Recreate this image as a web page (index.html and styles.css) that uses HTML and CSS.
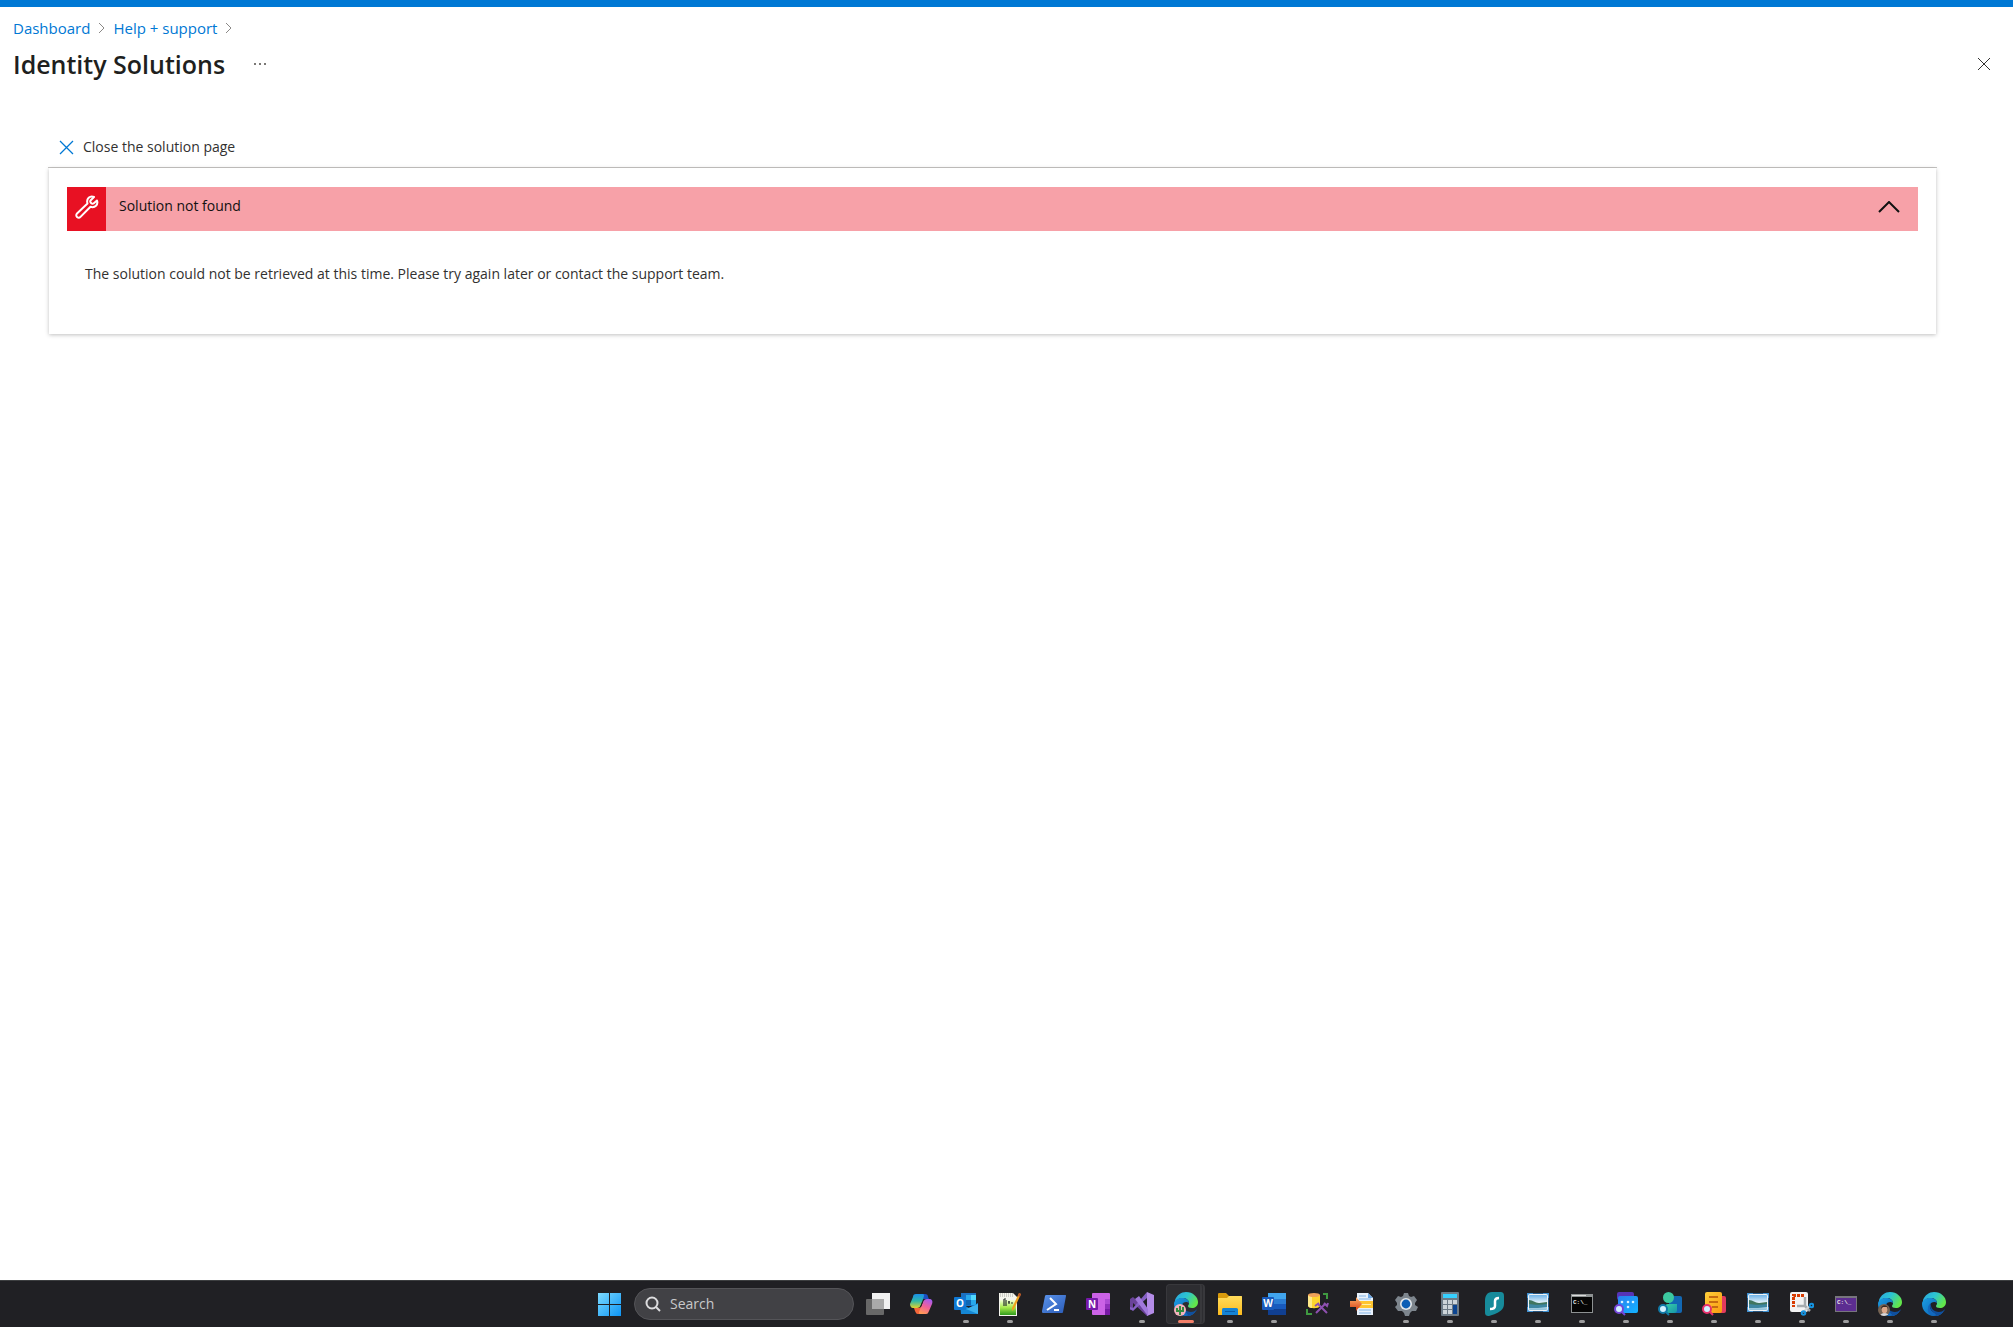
FILE: index.html
```html
<!doctype html>
<html lang="en">

<head>
    <meta charset="UTF-8" />
    <meta name="viewport" content="width=device-width, initial-scale=1.0" />
    <title>Identity Solutions</title>
    <link rel="stylesheet" href="styles.css">
</head>

<body>
    <!-- Shared gradients and icons used more than once -->
    <svg class="defs" aria-hidden="true">
        <defs>
            <linearGradient id="winGrad" gradientUnits="userSpaceOnUse" x1="0" y1="0" x2="24" y2="24">
                <stop offset="0" stop-color="#7fdcff" />
                <stop offset="1" stop-color="#0a93f5" />
            </linearGradient>
            <linearGradient id="edgeTop" x1="0" y1="0" x2="1" y2="0.5">
                <stop offset="0" stop-color="#2aa5e0" />
                <stop offset="0.5" stop-color="#2cc5d2" />
                <stop offset="1" stop-color="#62e64a" />
            </linearGradient>
            <linearGradient id="edgeLeft" x1="0" y1="0" x2="1" y2="1">
                <stop offset="0" stop-color="#1b9de2" />
                <stop offset="1" stop-color="#0c62b4" />
            </linearGradient>
            <linearGradient id="copA" x1="0" y1="0" x2="0" y2="1">
                <stop offset="0" stop-color="#1a8fe8" />
                <stop offset="0.5" stop-color="#2fb8a8" />
                <stop offset="1" stop-color="#e3d32c" />
            </linearGradient>
            <linearGradient id="copB" x1="0.7" y1="0" x2="0.3" y2="1">
                <stop offset="0" stop-color="#a65cf0" />
                <stop offset="0.5" stop-color="#f0609a" />
                <stop offset="1" stop-color="#ff9a55" />
            </linearGradient>
            <linearGradient id="folder" x1="0" y1="0" x2="0" y2="1">
                <stop offset="0" stop-color="#ffdc5c" />
                <stop offset="1" stop-color="#fdbb1e" />
            </linearGradient>
            <linearGradient id="green" x1="0" y1="0" x2="0" y2="1">
                <stop offset="0" stop-color="#f4ffd8" />
                <stop offset="0.5" stop-color="#a6ea4c" />
                <stop offset="1" stop-color="#2f9a1c" />
            </linearGradient>
            <linearGradient id="ps" x1="0" y1="0" x2="1" y2="1">
                <stop offset="0" stop-color="#5b93ea" />
                <stop offset="1" stop-color="#2b5cb8" />
            </linearGradient>
            <linearGradient id="sky" x1="0" y1="0" x2="0" y2="1">
                <stop offset="0" stop-color="#6fb4ea" />
                <stop offset="0.5" stop-color="#e2f1fa" />
                <stop offset="1" stop-color="#8cc0da" />
            </linearGradient>
            <linearGradient id="cal" x1="0" y1="0" x2="1" y2="1">
                <stop offset="0" stop-color="#2a7ff0" />
                <stop offset="1" stop-color="#12b4ff" />
            </linearGradient>
            <linearGradient id="people" x1="0" y1="0" x2="1" y2="1">
                <stop offset="0" stop-color="#38d0a8" />
                <stop offset="1" stop-color="#1794a8" />
            </linearGradient>
            <linearGradient id="note" x1="0" y1="0" x2="1" y2="1">
                <stop offset="0" stop-color="#ffcf3a" />
                <stop offset="1" stop-color="#f99a10" />
            </linearGradient>
            <linearGradient id="arrow" x1="0" y1="0" x2="0" y2="1">
                <stop offset="0" stop-color="#ffb16a" />
                <stop offset="1" stop-color="#d63d14" />
            </linearGradient>
        </defs>
        <symbol id="edge" viewBox="0 0 24 24">
            <path d="M1 8C3 3 7 0 12 0c7 0 12 5 12 10 0 4-3 6-6 6-3 0-4-1-4-2s1-1 1-3c0-3-3-5-6-5-4 0-7 2-8 4z" fill="url(#edgeTop)" />
            <path d="M0 12c0-4 4-6 8-6 4 0 7 2 7 5-1-1-2-1-3-1-3 0-5 3-4 6 1 5 5 7 9 7-2 1-3 1-5 1C5 24 0 18 0 12z" fill="url(#edgeLeft)" />
            <path d="M9 11c-2 3-1 6 1 8 3 3 8 3 12 0-2 3-5 5-9 5-5 0-8-4-7-8 0-2 1-4 3-5z" fill="#1268bd" />
            <path d="M9 11c-1 5 3 9 8 9 2 0 4-1 5-2 1-1 1 0 0 1-2 3-6 5-10 5 4-1 1-2-1-4-3-3-4-6-2-9z" fill="#0f4f9e" />
        </symbol>
        <symbol id="photo" viewBox="0 0 24 24">
            <rect x="1" y="1" width="22" height="19" fill="#27557f" />
            <path d="M1 1h6v5H1zM17 1h6v5h-6zM1 15h6v5H1zM17 15h6v5h-6z" fill="#3f8fcf" />
            <rect x="2" y="2" width="20" height="17" rx="2" fill="#f2f4f5" />
            <rect x="3" y="3" width="18" height="15" rx="1" fill="url(#sky)" />
            <path d="M3 8c4 0 6 3 10 3 3 0 5-1 8-1v3H3z" fill="#3f7560" />
            <path d="M3 12c5 1 12 1 18 0v3c-6 1-12 1-18 1z" fill="#3d86a2" />
        </symbol>
    </svg>

    <div class="top-bar"></div>

    <header class="blade-header">
        <nav class="breadcrumb" aria-label="Breadcrumb">
            <a href="#">Dashboard</a>
            <svg class="crumb-arrow" viewBox="0 0 7 12"><path d="M1 1l5 5-5 5" /></svg>
            <a href="#">Help + support</a>
            <svg class="crumb-arrow" viewBox="0 0 7 12"><path d="M1 1l5 5-5 5" /></svg>
        </nav>
        <div class="title-row">
            <h1>Identity Solutions</h1>
            <button class="icon-btn more-btn" aria-label="More">
                <svg width="14" height="14" viewBox="0 0 14 14"><path d="M1 6h2v2H1zM6 6h2v2H6zM11 6h2v2h-2z" fill="#7a7875" /></svg>
            </button>
            <button class="icon-btn close-btn" aria-label="Close">
                <svg width="14" height="14" viewBox="0 0 14 14"><path d="M1 1l12 12M13 1L1 13" stroke="#323130" fill="none" /></svg>
            </button>
        </div>
    </header>

    <main class="content">
        <div class="toolbar">
            <button class="command">
                <svg width="15" height="15" viewBox="0 0 15 15"><path d="M1 1l13 13M14 1L1 14" stroke="#0078d4" stroke-width="1.3" fill="none" /></svg>
                Close the solution page
            </button>
        </div>
        <section class="card">
            <div class="banner">
                <div class="banner-icon">
                    <svg width="24" height="24" viewBox="0 0 24 24">
                        <path d="M19 2c-4-2-8 2-6.500 6.500L2 18.500c-1 1-1 2.500 0 3.400s2.500 1 3.500 0L15.500 11.800c4.500 1.500 8-2.300 6.500-6.300L18.500 8.500c-1.500 1-4-1.500-3-3z" />
                    </svg>
                </div>
                <h2>Solution not found</h2>
                <button class="icon-btn collapse-btn" aria-label="Collapse">
                    <svg width="22" height="12" viewBox="0 0 22 12"><path d="M1 11L11 1l10 10" stroke="#111" stroke-width="2" fill="none" /></svg>
                </button>
            </div>
            <p class="message">The solution could not be retrieved at this time. Please try again later or contact the support team.</p>
        </section>
    </main>

    <footer class="taskbar">
        <button class="task" aria-label="Start">
            <svg viewBox="0 0 24 24"><path d="M0 1h11v11H0zM12 1h11v11H12zM0 13h11v11H0zM12 13h11v11H12z" fill="url(#winGrad)" /></svg>
        </button>
        <label class="search">
            <svg width="16" height="16" viewBox="0 0 16 16"><circle cx="7" cy="7" r="5.500" /><path d="M11 11l4 4" /></svg>
            <input type="text" placeholder="Search" aria-label="Search">
        </label>
        <button class="task" aria-label="Task view">
            <svg viewBox="0 0 24 24">
                <rect x="6" y="1" width="18" height="16" fill="#f0f0f0" />
                <rect y="7" width="18" height="16" rx="1" fill="#686868" />
                <path d="M6 7h12v10H6z" fill="#a9a9a9" />
            </svg>
        </button>
        <button class="task" aria-label="Copilot">
            <svg viewBox="0 0 24 24">
                <path d="M11 2h4c2 0 3 1 3 3l1 2h-4c-2 0-3 0-4 2z" fill="#1b4fc0" />
                <path d="M6 2h7c1 0 1 1 1 2l-3 9c-1 2-2 3-4 3H3c-2 0-3-2-3-4l3-7c0-2 1-3 3-3z" fill="url(#copA)" />
                <path d="M12 22H8c-2 0-2-1-3-3l-1-3h4c2 0 3-1 4-2z" fill="#f4663a" />
                <path d="M16 22h-6c-1 0-1-1-1-2l4-10c1-2 2-3 4-3h2c3 0 4 2 3 5l-3 7c-1 2-1 3-3 3z" fill="url(#copB)" />
                <path d="M12 10l1 0-2 5-1 0z" fill="#202024" />
            </svg>
        </button>
        <button class="task open" aria-label="Outlook">
            <svg viewBox="0 0 24 24">
                <path d="M7 1h15v13H7z" fill="#1a70c2" />
                <path d="M12 3h5v5h-5z" fill="#28a8ea" />
                <path d="M17 3h5v5h-5z" fill="#50d9ff" />
                <path d="M12 8h5v5h-5z" fill="#0f67b5" />
                <path d="M17 8h5v5h-5z" fill="#28a8ea" />
                <path d="M6 11l9 5 9-5v11H7z" fill="#1587d4" />
                <path d="M24 12v10L12 17z" fill="#3bb0ec" />
                <rect y="5" width="12" height="13" rx="1" fill="#0f78d4" />
                <text x="6" y="15" class="glyph">O</text>
            </svg>
        </button>
        <button class="task open" aria-label="Notepad++">
            <svg viewBox="0 0 24 24">
                <path d="M1 1h14l4 4v19H1z" fill="#f5f5ee" />
                <path d="M2 8h16v15H2z" fill="url(#green)" />
                <path d="M2 2h13M2 4h13" stroke="#a5a5a0" stroke-dasharray="1 1" />
                <path d="M6 7v7M8 8v6M6 7h2M10 10h2M11 9v3M13 11h2" stroke="#27302a" stroke-width="1.200" fill="none" />
                <path d="M21 1l2 1-7 15-2 2v-3z" fill="#f0a21e" />
                <path d="M21 1l2 1-1 3-2-1z" fill="#b84d2c" />
            </svg>
        </button>
        <button class="task" aria-label="PowerShell">
            <svg viewBox="0 0 24 24">
                <path d="M5 3h18c1 0 1 0 1 1l-3 16c0 1-1 1-2 1H1c-1 0-1-1-1-2L3 4c0-1 1-1 2-1z" fill="url(#ps)" />
                <path d="M8 6l6 6-9 6M12 18h5" stroke="#fff" stroke-width="2" fill="none" />
            </svg>
        </button>
        <button class="task" aria-label="OneNote">
            <svg viewBox="0 0 24 24">
                <rect x="6" y="1" width="18" height="22" rx="1" fill="#cb62e6" />
                <path d="M19 7h5v5h-5z" fill="#ad4bd4" />
                <path d="M19 12h5v5h-5z" fill="#8f2fba" />
                <path d="M19 17h5v6h-5z" fill="#7619a5" />
                <rect y="6" width="12" height="12" rx="1" fill="#7719aa" />
                <text x="6" y="16" class="glyph">N</text>
            </svg>
        </button>
        <button class="task open" aria-label="Visual Studio">
            <svg viewBox="0 0 24 24">
                <path d="M17 0l7 3v18l-7 3z" fill="#b48ce8" />
                <path d="M0 7l3-2 14 13v6L3 11v6l-3 1z" fill="#6a4399" />
                <path d="M17 0v6L3 19l-3-2v-2l3 1z" fill="#8661c5" />
                <path d="M5 7l4-3 9 13v7z" fill="#a179dc" />
            </svg>
        </button>
        <button class="task open active" aria-label="Microsoft Edge">
            <svg viewBox="0 0 24 24">
                <use href="#edge" />
                <circle cx="6" cy="18" r="6" fill="#f3b3bd" />
                <path d="M6 23v-9M3 16v3h6v-4" stroke="#338a3e" stroke-width="2" fill="none" />
            </svg>
        </button>
        <button class="task open" aria-label="File Explorer">
            <svg viewBox="0 0 24 24">
                <path d="M0 2c0-1 1-1 1-1h7l3 3v4H0z" fill="#d89a0c" />
                <path d="M1 6h8l2-2h12c1 0 1 0 1 1v17c0 1 0 1-1 1H1c-1 0-1 0-1-1V6z" fill="url(#folder)" />
                <path d="M4 23v-5c0-2 1-2 2-2h12c2 0 2 1 2 2v5z" fill="#1583d4" />
                <path d="M7 19h10v1H7z" fill="#0b5ca5" />
            </svg>
        </button>
        <button class="task open" aria-label="Word">
            <svg viewBox="0 0 24 24">
                <path d="M6 1h18v6H6z" fill="#41a5ee" />
                <path d="M6 7h18v5H6z" fill="#2b7cd3" />
                <path d="M6 12h18v5H6z" fill="#185abd" />
                <path d="M6 17h18v6H6z" fill="#103f91" />
                <rect y="5" width="12" height="13" rx="1" fill="#185abd" />
                <text x="6" y="15" class="glyph">W</text>
            </svg>
        </button>
        <button class="task" aria-label="Data tools">
            <svg viewBox="0 0 24 24">
                <path d="M2 3v11c1 3 11 3 12 0V3z" fill="#ffd52e" />
                <path d="M2 3v11c1 1 2 2 4 2V4z" fill="#ffe98a" />
                <ellipse cx="8" cy="3" rx="6" ry="2" fill="#f0a25a" />
                <path d="M17 2h4v5M1 17v5h5" stroke="#3f9a41" stroke-width="2" fill="none" />
                <path d="M10 21l9-9M12 12l9 9M9 14l4-3M18 11l3 3 1-3" stroke="#8e50b0" stroke-width="2" fill="none" />
            </svg>
        </button>
        <button class="task" aria-label="Import">
            <svg viewBox="0 0 24 24">
                <path d="M7 1h11l5 5v17H7z" fill="#e9f2fc" />
                <path d="M18 1l5 5h-5z" fill="#6da7e4" />
                <path d="M9 4h7M9 7h12M9 18h12M9 21h12" stroke="#83b5e8" stroke-width="1" />
                <path d="M8 9h15v7H8z" fill="#ffc531" />
                <path d="M10 12h11v1H10z" fill="#fff0a8" />
                <path d="M0 9h6V5l6 7-6 7v-4H0z" fill="url(#arrow)" />
            </svg>
        </button>
        <button class="task open" aria-label="Settings">
            <svg viewBox="0 0 24 24">
                <path d="M9 4l1-3h4l1 3 2 1 3-1 3 4-2 3v2l3 2-2 4h-4l-2 2-1 3h-4l-1-3-2-2H4l-3-4 2-2v-2L1 8l3-4 3 1z" fill="#7d858d" />
                <circle cx="12" cy="12" r="6" fill="#e4e7ea" />
                <circle cx="12" cy="12" r="4.400" fill="#0d5eb5" />
            </svg>
        </button>
        <button class="task open" aria-label="Calculator">
            <svg viewBox="0 0 24 24">
                <rect x="3" width="18" height="24" rx="1" fill="#6c7a86" />
                <path d="M5 2h14v4H5z" fill="#36cfff" />
                <path d="M5 8h4v4H5zM10 8h4v4h-4zM15 8h4v4h-4zM5 13h4v4H5zM10 13h4v4h-4zM5 18h4v4H5zM10 18h4v4h-4z" fill="#ccd4d9" />
                <path d="M15 13h4v9h-4z" fill="#0b4490" />
            </svg>
        </button>
        <button class="task open" aria-label="Surfshark">
            <svg viewBox="0 0 24 24">
                <path d="M10 0h8c3 0 4 1 4 4v8c0 6-5 8-9 10l-6 2c-3 0-4-1-4-4V9c0-5 2-9 7-9z" fill="#178b9b" />
                <path d="M17 6c-3 0-4 1-4 3v5c0 2-1 3-5 3" stroke="#fff" stroke-width="2.500" fill="none" />
            </svg>
        </button>
        <button class="task open" aria-label="Remote session">
            <svg viewBox="0 0 24 24"><use href="#photo" /></svg>
        </button>
        <button class="task open" aria-label="Command Prompt">
            <svg viewBox="0 0 24 24">
                <rect x="1" y="2" width="22" height="19" fill="#8d9192" />
                <path d="M2 5h20v15H2z" fill="#050505" />
                <path d="M2 3h14v1H2z" fill="#dcdcdc" />
                <text x="3" y="12" class="prompt">C:\_</text>
            </svg>
        </button>
        <button class="task open" aria-label="Calendar search">
            <svg viewBox="0 0 24 24">
                <rect x="3" width="17" height="8" rx="2" fill="#5634b8" />
                <rect x="4" y="4" width="20" height="17" rx="2" fill="url(#cal)" />
                <g fill="#d8f2ff"><circle cx="8" cy="10" r="1.300" /><circle cx="14" cy="10" r="1.300" /><circle cx="19" cy="10" r="1.300" /><circle cx="14" cy="15" r="1.300" /></g>
                <path d="M8 20l3 3" stroke="#7445d8" stroke-width="2" />
                <circle cx="5" cy="17" r="4" fill="#d2f0ff" stroke="#7445d8" stroke-width="2" />
            </svg>
        </button>
        <button class="task open" aria-label="People search">
            <svg viewBox="0 0 24 24">
                <rect x="11" y="4" width="13" height="17" rx="2" fill="#1268b4" />
                <path d="M7 15c0-2 1-3 3-3h9v6c0 2-1 3-3 3H7z" fill="url(#people)" />
                <circle cx="10.500" cy="5.500" r="5.500" fill="#3cc9a0" />
                <path d="M8 20l3 3" stroke="#107aa8" stroke-width="2" />
                <circle cx="5" cy="17" r="4" fill="#d2f0ff" stroke="#107aa8" stroke-width="2" />
            </svg>
        </button>
        <button class="task open" aria-label="Document search">
            <svg viewBox="0 0 24 24">
                <rect x="14" y="4" width="10" height="17" rx="2" fill="#e23a5e" />
                <rect x="3" width="17" height="21" rx="2" fill="url(#note)" />
                <path d="M7 5h9M7 10h9M10 15h6" stroke="#c66a10" stroke-width="2" />
                <path d="M8 20l3 3" stroke="#e8306c" stroke-width="2" />
                <circle cx="5" cy="17" r="4" fill="#d2f0ff" stroke="#e8306c" stroke-width="2" />
            </svg>
        </button>
        <button class="task open" aria-label="Remote session">
            <svg viewBox="0 0 24 24"><use href="#photo" /></svg>
        </button>
        <button class="task open" aria-label="Snipping Tool">
            <svg viewBox="0 0 24 24">
                <rect width="18" height="20" rx="2" fill="#f3f3f3" />
                <path d="M14 3.500H3.500V15" stroke="#d83b01" stroke-width="3" stroke-dasharray="3 1" fill="none" />
                <path d="M7 14h8V5M15 14l5 5" stroke="#a6abae" stroke-width="2.500" fill="none" />
                <path d="M13 20l7-6" stroke="#cfd3d5" stroke-width="2" />
                <circle cx="21.500" cy="13.500" r="1.800" stroke="#1593e0" stroke-width="2" fill="none" />
                <circle cx="13.500" cy="21" r="1.800" stroke="#1593e0" stroke-width="2" fill="none" />
            </svg>
        </button>
        <button class="task open" aria-label="Developer Command Prompt">
            <svg viewBox="0 0 24 24">
                <rect x="1" y="4" width="22" height="16" fill="#77757d" />
                <path d="M2 6h20v13H2z" fill="#5c2d91" />
                <text x="3" y="12" class="prompt">C:\_</text>
            </svg>
        </button>
        <button class="task open" aria-label="Microsoft Edge">
            <svg viewBox="0 0 24 24">
                <use href="#edge" />
                <clipPath id="avatar"><circle cx="6" cy="18" r="6" /></clipPath>
                <g clip-path="url(#avatar)">
                    <path d="M0 12h12v12H0z" fill="#756353" />
                    <path d="M2 24c1-4 8-4 9 0z" fill="#d5d7dc" />
                    <ellipse cx="6.500" cy="17.500" rx="2.800" ry="3.800" fill="#dba88a" />
                    <path d="M3 17c0-5 7-5 7 0l-1-2H5z" fill="#3c2a22" />
                </g>
            </svg>
        </button>
        <button class="task open" aria-label="Microsoft Edge">
            <svg viewBox="0 0 24 24"><use href="#edge" /></svg>
        </button>
    </footer>
</body>

</html>
```
FILE: styles.css
```css
* {
    box-sizing: border-box;
}

body {
    margin: 0;
    min-height: 100vh;
    display: flex;
    flex-direction: column;
    background: #fff;
    color: #323130;
    font-family: "Segoe UI", "Open Sans", "Noto Sans", sans-serif;
    font-size: 14px;
    line-height: 20px;
}

button {
    padding: 0;
    border: none;
    background: none;
    color: inherit;
    font: inherit;
    cursor: pointer;
}

svg {
    display: block;
    flex: none;
}

.defs {
    position: absolute;
    width: 0;
    height: 0;
}

.top-bar {
    height: 7px;
    background: #0078d4;
}

.blade-header {
    padding: 11px 22px 0 13px;
}

.breadcrumb {
    display: flex;
    align-items: center;
    gap: 8px;
    font-size: 15px;
}

.breadcrumb a {
    color: #0078d4;
    text-decoration: none;
}

.breadcrumb a:hover {
    text-decoration: underline;
}

.crumb-arrow {
    width: 7px;
    height: 12px;
    fill: none;
    stroke: #8a8886;
}

.title-row {
    display: flex;
    align-items: center;
    margin-top: 10px;
}

h1 {
    margin: 0;
    font-size: 25px;
    line-height: 32px;
    font-weight: 600;
    color: #201f1e;
}

.more-btn {
    margin-left: 28px;
}

.close-btn {
    margin-left: auto;
}

.content {
    flex: 1;
    padding: 47px 76px 0 48px;
}

.toolbar {
    padding: 10px 11px;
    border-bottom: 1px solid #c8c6c4;
}

.command {
    display: flex;
    align-items: center;
    gap: 9px;
}

.card {
    margin: 0 1px;
    padding: 19px 18px 50px;
    box-shadow: 0 1px 4px rgba(0, 0, 0, 0.25);
}

.banner {
    display: flex;
    height: 44px;
    padding-right: 18px;
    background: #f7a1a8;
    color: #111;
}

.banner-icon {
    display: flex;
    align-items: center;
    justify-content: center;
    width: 39px;
    margin-right: 13px;
    padding-bottom: 4px;
    background: #e81123;
}

.banner-icon svg {
    fill: none;
    stroke: #fff;
    stroke-width: 2;
    stroke-linejoin: round;
}

.banner h2 {
    margin: 9px 0 0;
    font-size: 14px;
    line-height: 20px;
    font-weight: 400;
}

.collapse-btn {
    margin-left: auto;
    padding-bottom: 5px;
}

.message {
    margin: 33px 18px 0;
}

.taskbar {
    display: flex;
    justify-content: flex-end;
    align-items: center;
    height: 47px;
    padding-right: 57px;
    border-top: 1px solid #3c3e40;
    background: #202024;
}

.task {
    position: relative;
    width: 44px;
    height: 40px;
    display: flex;
    align-items: center;
    justify-content: center;
}

.task svg {
    width: 24px;
    height: 24px;
}

/* Running app marker under the icon */
.open::after {
    content: "";
    position: absolute;
    bottom: 1px;
    left: 19px;
    width: 6px;
    height: 3px;
    border-radius: 2px;
    background: #9b9b9d;
}

/* Focused window with a second one stacked behind */
.active::before {
    content: "";
    position: absolute;
    inset: 0 3px 0 2px;
    border: 1px solid #38383c;
    border-right: 5px double #38383c;
    border-radius: 4px;
    background: #2d2d31;
}

.active svg {
    position: relative;
}

.active::after {
    left: 14px;
    width: 16px;
    background: #f4806a;
}

.search {
    display: flex;
    align-items: center;
    gap: 9px;
    width: 220px;
    height: 32px;
    margin: 0 2px;
    padding: 0 10px;
    border: 1px solid #545458;
    border-radius: 16px;
    background: #414145;
}

.search svg {
    fill: none;
    stroke: #dcdcde;
    stroke-width: 2;
}

.search input {
    flex: 1;
    min-width: 0;
    padding: 0;
    border: none;
    outline: none;
    background: transparent;
    color: #fff;
    font: inherit;
}

.search input::placeholder {
    color: #c8c8ca;
    opacity: 1;
}

.glyph {
    fill: #fff;
    font-size: 10px;
    font-weight: 700;
    text-anchor: middle;
}

.prompt {
    fill: #e8e8e8;
    font-family: "Liberation Mono", monospace;
    font-size: 6px;
    font-weight: 700;
}
```
